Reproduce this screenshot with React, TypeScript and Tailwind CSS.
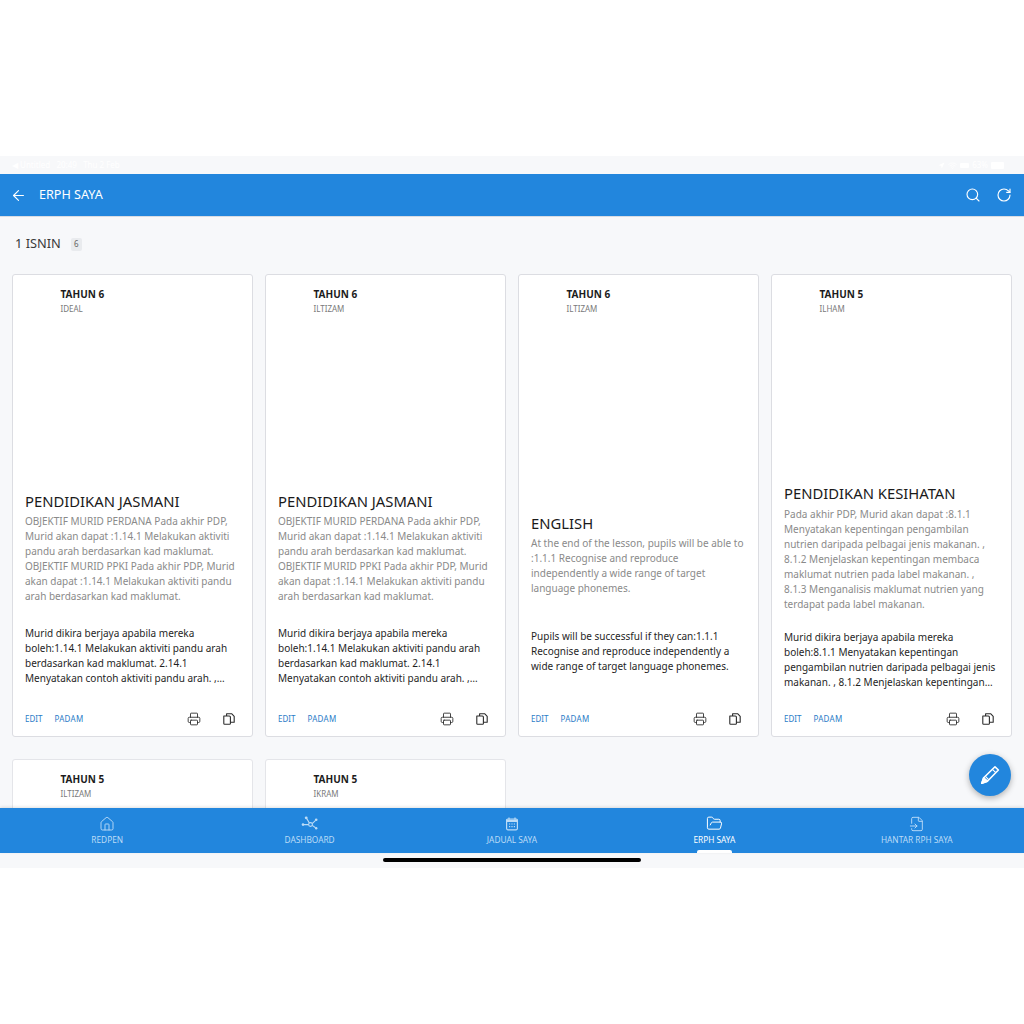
import { ArrowLeft, FileInput, FolderOpen, Home, Navigation, Printer, RotateCw, Search, Wifi } from "lucide-react";

const jasmaniDesc =
  "OBJEKTIF MURID PERDANA Pada akhir PDP, Murid akan dapat :1.14.1 Melakukan aktiviti pandu arah berdasarkan kad maklumat. OBJEKTIF MURID PPKI Pada akhir PDP, Murid akan dapat :1.14.1 Melakukan aktiviti pandu arah berdasarkan kad maklumat.";
const jasmaniGoal =
  "Murid dikira berjaya apabila mereka boleh:1.14.1 Melakukan aktiviti pandu arah berdasarkan kad maklumat. 2.14.1 Menyatakan contoh aktiviti pandu arah. ,…";

const cards = [
  { year: "TAHUN 6", group: "IDEAL", title: "PENDIDIKAN JASMANI", desc: jasmaniDesc, goal: jasmaniGoal, titleGap: "mt-[3px]", gap: "mt-[22px]", bottom: "pb-[13px]" },
  { year: "TAHUN 6", group: "ILTIZAM", title: "PENDIDIKAN JASMANI", desc: jasmaniDesc, goal: jasmaniGoal, titleGap: "mt-[3px]", gap: "mt-[22px]", bottom: "pb-[13px]" },
  {
    year: "TAHUN 6",
    group: "ILTIZAM",
    title: "ENGLISH",
    desc: "At the end of the lesson, pupils will be able to :1.1.1 Recognise and reproduce independently a wide range of target language phonemes.",
    goal: "Pupils will be successful if they can:1.1.1 Recognise and reproduce independently a wide range of target language phonemes.",
    titleGap: "mt-[3px]",
    gap: "mt-[33px]",
    bottom: "pb-[25px]",
  },
  {
    year: "TAHUN 5",
    group: "ILHAM",
    title: "PENDIDIKAN KESIHATAN",
    desc: "Pada akhir PDP, Murid akan dapat :8.1.1 Menyatakan kepentingan pengambilan nutrien daripada pelbagai jenis makanan. , 8.1.2 Menjelaskan kepentingan membaca maklumat nutrien pada label makanan. , 8.1.3 Menganalisis maklumat nutrien yang terdapat pada label makanan.",
    goal: "Murid dikira berjaya apabila mereka boleh:8.1.1 Menyatakan kepentingan pengambilan nutrien daripada pelbagai jenis makanan. , 8.1.2 Menjelaskan kepentingan…",
    titleGap: "mt-[4px]",
    gap: "mt-[18px]",
    bottom: "pb-[9px]",
  },
];

function DashboardIcon() {
  return (
    <svg width="18" height="18" viewBox="0 0 18 18" fill="none" stroke="currentColor" strokeWidth="1.1">
      <circle cx="9.5" cy="9.5" r="1.9" />
      <path d="M8.4 8 5.6 3.4M11.2 8.6l3.4-3.2M11.2 10.4l3.4 2.4M7.6 9.6H2.4" />
      <circle cx="5.2" cy="2.8" r="1.4" fill="currentColor" stroke="none" />
      <circle cx="15.2" cy="4.8" r="1.3" fill="currentColor" stroke="none" />
      <circle cx="15.2" cy="13.2" r="1.2" fill="currentColor" stroke="none" />
      <circle cx="2" cy="9.6" r="1.3" fill="currentColor" stroke="none" />
    </svg>
  );
}

function CalendarIcon() {
  return (
    <svg width="16" height="16" viewBox="0 0 16 16" fill="none" stroke="currentColor" strokeWidth="1.2">
      <rect x="2.6" y="3" width="10.8" height="10.8" rx="1.2" />
      <path d="M2.6 4.8h10.8" strokeWidth="2.4" />
      <path d="M5 1.4v2.4M11 1.4v2.4" />
      <path d="M5 8h1.2M7.4 8h1.2M9.8 8H11M5 10.6h1.2M7.4 10.6h1.2M9.8 10.6H11" />
    </svg>
  );
}

function PencilIcon() {
  return (
    <svg width="20" height="20" viewBox="0 0 20 20" fill="none" stroke="white" strokeWidth="1.6" strokeLinejoin="round">
      <path d="M15 1.8 18.4 5 7.4 16.2 1.8 18.2l1.9-5.4z" />
      <path d="M12.4 4.4l3.4 3.3M5.4 11.4l3.2 3.2" strokeWidth="1.1" />
      <path d="M1.8 18.2l1.9-5.4 3.7 3.4z" fill="white" />
    </svg>
  );
}

function CopyIcon() {
  return (
    <svg width="12" height="12" viewBox="0 0 12 12" fill="none" stroke="#2b2b2b" strokeWidth="1.1" strokeLinejoin="round">
      <path d="M3.6 3V.7h5l2.6 2.6v5.9H7.4" />
      <path d="M.8 3h5.6a1 1 0 0 1 1 1v6.5a.8.8 0 0 1-.8.8H1.6a.8.8 0 0 1-.8-.8z" fill="white" />
    </svg>
  );
}

const navItems = [
  { label: "REDPEN", icon: <Home size={16} strokeWidth={1.4} />, active: false },
  { label: "DASHBOARD", icon: <DashboardIcon />, active: false },
  { label: "JADUAL SAYA", icon: <CalendarIcon />, active: false },
  { label: "ERPH SAYA", icon: <FolderOpen size={17} strokeWidth={1.4} />, active: true },
  { label: "HANTAR RPH SAYA", icon: <FileInput size={16} strokeWidth={1.4} />, active: false },
];

function LessonCard({ card }: { card: (typeof cards)[number] }) {
  return (
    <div className="flex h-[463px] flex-col rounded-[3px] border border-[#dcdde2] bg-white">
      <div className="pl-[47.5px] pt-[12px]">
        <div className="text-[10px] leading-[14px] font-bold text-[#1c1c1c]">{card.year}</div>
        <div className="mt-[1px] text-[8px] leading-[14px] text-[#7a7a7a]">{card.group}</div>
      </div>
      <div className={`flex flex-1 flex-col justify-end px-[12px] ${card.bottom}`}>
        <h3 className="text-[14.8px] leading-[20px] font-normal text-[#1a1a1a]">{card.title}</h3>
        <p className={`text-[10px] leading-[15px] text-[#8a8a8a] ${card.titleGap}`}>{card.desc}</p>
        <p className={`pb-[1px] text-[10px] leading-[15px] text-[#1f1f1f] ${card.gap}`}>{card.goal}</p>
      </div>
      <div className="flex h-[36px] items-center px-[12px] pt-[1px]">
        <span className="text-[8px] text-[#2a7cc7]">EDIT</span>
        <span className="ml-[12px] text-[8px] tracking-[0.3px] text-[#2a7cc7]">PADAM</span>
        <Printer className="ml-auto mr-[22px] text-[#2b2b2b]" size={14} strokeWidth={1.5} />
        <div className="mr-[5px]">
          <CopyIcon />
        </div>
      </div>
    </div>
  );
}

function ShortCard({ year, group }: { year: string; group: string }) {
  return (
    <div className="h-[463px] rounded-[3px] border border-[#e4e5e9] bg-white">
      <div className="pl-[47.5px] pt-[12px]">
        <div className="text-[10px] leading-[14px] font-bold text-[#1c1c1c]">{year}</div>
        <div className="mt-[1px] text-[8px] leading-[14px] text-[#7a7a7a]">{group}</div>
      </div>
    </div>
  );
}

export default function App() {
  return (
    <div className="h-[1024px] bg-white pt-[156px] font-['Noto_Sans',sans-serif]">
      <div className="relative flex h-[712px] flex-col bg-[#f7f8fa]">
        <div className="flex h-[18px] items-center justify-between pl-[12px] pr-[20px] text-[8px] text-white">
          <span>◀ Untitled &nbsp; 20:49 &nbsp; Thu 2 Feb</span>
          <div className="flex items-center gap-[3px]">
            <Navigation size={7} fill="white" strokeWidth={1} />
            <Wifi size={9} strokeWidth={2} />
            <div className="h-[5px] w-[9px] rounded-[1px] bg-white" />
            <span>63%</span>
            <div className="h-[7px] w-[13px] rounded-[1px] bg-white" />
          </div>
        </div>
        <header className="flex h-[43px] items-center border-b border-[#d8dce4] bg-[#2286dd] pl-[10px] pr-[12px] text-white">
          <ArrowLeft size={17} strokeWidth={1.6} />
          <span className="ml-[12px] text-[12.6px]">ERPH SAYA</span>
          <Search className="ml-auto" size={16} strokeWidth={1.7} />
          <RotateCw className="ml-[15px]" size={16} strokeWidth={1.7} />
        </header>
        <main className="min-h-0 flex-1 overflow-hidden px-[12px]">
          <div className="flex h-[57px] items-center pb-[3px] pl-[3px]">
            <span className="text-[12.8px] text-[#3a3a3a]">1 ISNIN</span>
            <span className="ml-[10px] flex h-[13px] w-[11px] items-center justify-center rounded-[2px] bg-[#e9ebee] text-[8px] text-[#666]">6</span>
          </div>
          <div className="grid grid-cols-4 gap-x-[12px] gap-y-[22px]">
            {cards.map((card, i) => (
              <LessonCard card={card} key={i} />
            ))}
            <ShortCard year="TAHUN 5" group="ILTIZAM" />
            <ShortCard year="TAHUN 5" group="IKRAM" />
          </div>
        </main>
        <nav className="grid h-[45px] grid-cols-5 bg-[#2286dd] px-[6px] shadow-[0_-1px_3px_rgba(0,0,0,0.12)]">
          {navItems.map((item) => (
            <div
              key={item.label}
              className={`relative flex flex-col items-center pt-[7px] ${item.active ? "text-white" : "text-[#bcdcf7]"}`}
            >
              <div className="flex h-[17px] items-center">{item.icon}</div>
              <span className="mt-[2px] text-[8.3px] leading-[11px]">{item.label}</span>
              {item.active && <div className="absolute bottom-0 h-[3px] w-[35px] rounded-t-[2px] bg-white" />}
            </div>
          ))}
        </nav>
        <div className="flex h-[15px] justify-center pt-[5px]">
          <div className="h-[4px] w-[258px] rounded-full bg-black" />
        </div>
        <button className="absolute right-[13px] top-[598px] flex h-[42px] w-[42px] items-center justify-center rounded-full bg-[#2286dd] shadow-[0_2px_6px_rgba(0,0,0,0.3)]">
          <PencilIcon />
        </button>
      </div>
    </div>
  );
}
